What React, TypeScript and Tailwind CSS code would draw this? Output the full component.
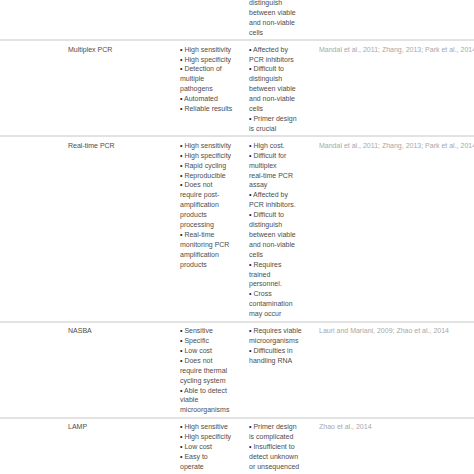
type Row = {
  method: string;
  pros: string[];
  cons: string[];
  refs: string;
};

const ROWS: Row[] = [
  {
    method: "Multiplex PCR",
    pros: ["• High sensitivity", "• High specificity", "• Detection of", "multiple", "pathogens", "• Automated", "• Reliable results"],
    cons: ["• Affected by", "PCR inhibitors", "• Difficult to", "distinguish", "between viable", "and non-viable", "cells", "• Primer design", "is crucial"],
    refs: "Mandal et al., 2011; Zhang, 2013; Park et al., 2014",
  },
  {
    method: "Real-time PCR",
    pros: [
      "• High sensitivity", "• High specificity", "• Rapid cycling", "• Reproducible", "• Does not", "require post-",
      "amplification", "products", "processing", "• Real-time", "monitoring PCR", "amplification", "products",
    ],
    cons: [
      "• High cost.", "• Difficult for", "multiplex", "real-time PCR", "assay", "• Affected by", "PCR inhibitors.",
      "• Difficult to", "distinguish", "between viable", "and non-viable", "cells", "• Requires", "trained",
      "personnel.", "• Cross", "contamination", "may occur",
    ],
    refs: "Mandal et al., 2011; Zhang, 2013; Park et al., 2014",
  },
  {
    method: "NASBA",
    pros: ["• Sensitive", "• Specific", "• Low cost", "• Does not", "require thermal", "cycling system", "• Able to detect", "viable", "microorganisms"],
    cons: ["• Requires viable", "microorganisms", "• Difficulties in", "handling RNA"],
    refs: "Lauri and Mariani, 2009; Zhao et al., 2014",
  },
  {
    method: "LAMP",
    pros: ["• High sensitive", "• High specificity", "• Low cost", "• Easy to", "operate"],
    cons: ["• Primer design", "is complicated", "• Insufficient to", "detect unknown", "or unsequenced", "target"],
    refs: "Zhao et al., 2014",
  },
];

function Lines({ items }: { items: string[] }) {
  return (
    <div>
      {items.map((t, i) =>
        t.startsWith("• ") ? (
          <div key={i} className="whitespace-nowrap">
            <span className="text-[#1a1a1a]">•</span> {t.slice(2)}
          </div>
        ) : (
          <div key={i} className="whitespace-nowrap">
            {t}
          </div>
        )
      )}
    </div>
  );
}

export default function App() {
  return (
    <div
      className="w-[474px] h-[474px] overflow-hidden bg-white text-[7px] leading-[9.9px] text-[#4d4d4d]"
      style={{ fontFamily: '"Liberation Sans", Arial, sans-serif' }}
    >
      {/* tail of the row above, scrolled off */}
      <div className="-mt-[2px] pb-[1.5px] grid grid-cols-[68px_112px_69px_70px_1fr]">
        <div />
        <div />
        <div />
        <Lines items={["distinguish", "between viable", "and non-viable", "cells"]} />
      </div>

      {ROWS.map((r) => (
        <div
          key={r.method}
          className="border-t-2 border-[#e2e2e2] pt-[3.5px] pb-[1.5px] grid grid-cols-[68px_112px_69px_70px_1fr]"
        >
          <div />
          <div className="whitespace-nowrap">{r.method}</div>
          <Lines items={r.pros} />
          <Lines items={r.cons} />
          <div className="whitespace-nowrap text-[#a8a8a8]">{r.refs}</div>
        </div>
      ))}
    </div>
  );
}
